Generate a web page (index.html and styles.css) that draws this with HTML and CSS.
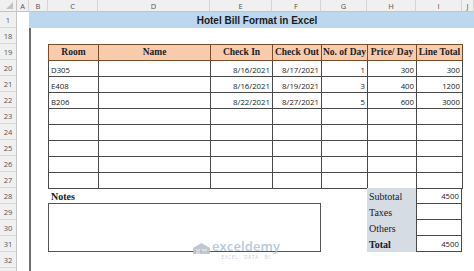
FILE: index.html
```html
<!DOCTYPE html>
<html>
<head>
<meta charset="utf-8">
<link rel="stylesheet" href="styles.css">
</head>
<body>
<div class="sheet">
  <div class="ch corner"><span class="tri"></span></div>
  <div class="ch">A</div>
  <div class="ch">B</div>
  <div class="ch">C</div>
  <div class="ch">D</div>
  <div class="ch">E</div>
  <div class="ch">F</div>
  <div class="ch">G</div>
  <div class="ch">H</div>
  <div class="ch">I</div>
  <div class="ch">J</div>

  <div class="rowhdr">
    <div class="rn">1</div>
    <div class="rn">18</div>
    <div class="rn">19</div>
    <div class="rn">20</div>
    <div class="rn">21</div>
    <div class="rn">22</div>
    <div class="rn">23</div>
    <div class="rn">24</div>
    <div class="rn">25</div>
    <div class="rn">26</div>
    <div class="rn">27</div>
    <div class="rn">28</div>
    <div class="rn">29</div>
    <div class="rn">30</div>
    <div class="rn">31</div>
    <div class="rn">32</div>
    <div class="rn last"></div>
  </div>

  <div class="title"><span>Hotel Bill Format in Excel</span></div>
  <div class="bline"></div>

  <div class="billwrap">
    <table class="bill">
      <colgroup>
        <col class="c-room"><col class="c-name"><col class="c-in"><col class="c-out"><col class="c-days"><col class="c-price"><col class="c-total">
      </colgroup>
      <thead>
        <tr><th>Room</th><th>Name</th><th>Check In</th><th>Check Out</th><th>No. of Day</th><th>Price/ Day</th><th>Line Total</th></tr>
      </thead>
      <tbody>
        <tr><td>D305</td><td></td><td class="r">8/16/2021</td><td class="r">8/17/2021</td><td class="r">1</td><td class="r">300</td><td class="r">300</td></tr>
        <tr><td>E408</td><td></td><td class="r">8/16/2021</td><td class="r">8/19/2021</td><td class="r">3</td><td class="r">400</td><td class="r">1200</td></tr>
        <tr><td>B206</td><td></td><td class="r">8/22/2021</td><td class="r">8/27/2021</td><td class="r">5</td><td class="r">600</td><td class="r">3000</td></tr>
        <tr><td></td><td></td><td></td><td></td><td></td><td></td><td></td></tr>
        <tr><td></td><td></td><td></td><td></td><td></td><td></td><td></td></tr>
        <tr><td></td><td></td><td></td><td></td><td></td><td></td><td></td></tr>
        <tr><td></td><td></td><td></td><td></td><td></td><td></td><td></td></tr>
        <tr><td></td><td></td><td></td><td></td><td></td><td></td><td></td></tr>
      </tbody>
    </table>
  </div>

  <div class="notes-label">Notes</div>
  <div class="notes-box"></div>

  <div class="summary">
    <div class="sl">Subtotal</div><div class="sv">4500</div>
    <div class="sl">Taxes</div><div class="sv"></div>
    <div class="sl">Others</div><div class="sv"></div>
    <div class="sl bold">Total</div><div class="sv">4500</div>
  </div>

  <div class="wm">
    <svg class="wm-icon" width="17" height="11" viewBox="0 0 17 11">
      <polygon points="0,5 8.5,0 17,5 17,11 0,11" fill="#b9c2ce"/>
      <rect x="3" y="6" width="4" height="5" fill="#d3d9e1"/>
      <rect x="9" y="6" width="5" height="3" fill="#d3d9e1"/>
    </svg>
    <div class="wm-text">
      <span class="wm-name">exceldemy</span>
      <span class="wm-sub">EXCEL · DATA · BI</span>
    </div>
  </div>
</div>
</body>
</html>
```

FILE: styles.css
```css
html, body {
  margin: 0;
  padding: 0;
  background: #ffffff;
}

.sheet {
  position: relative;
  width: 474px;
  height: 271px;
  overflow: hidden;
  display: grid;
  grid-template-columns: 17px 12px 19px 50px 112px 62px 49px 46px 49px 46px 1fr;
  grid-template-rows: 12px repeat(16, 16px) 1fr;
  background: #ffffff;
}

/* column headers */
.ch {
  background: #f0f0f0;
  border-right: 1px solid #d5d5d5;
  border-bottom: 1px solid #c4c4c4;
  box-sizing: border-box;
  display: flex;
  align-items: center;
  justify-content: center;
  font-family: "Open Sans", sans-serif;
  font-size: 7.5px;
  color: #555555;
}

.corner {
  position: relative;
  border-right: 1px solid #c4c4c4;
}

.tri {
  position: absolute;
  right: 3px;
  bottom: 2px;
  width: 0;
  height: 0;
  border-left: 7px solid transparent;
  border-bottom: 7px solid #c2c2c2;
}

/* row headers */
.rowhdr {
  grid-column: 1;
  grid-row: 2 / -1;
  display: flex;
  flex-direction: column;
  background: #f0f0f0;
  border-right: 1px solid #c4c4c4;
}

.rn {
  flex: none;
  height: 16px;
  box-sizing: border-box;
  border-bottom: 1px solid #d8d8d8;
  font-family: "Open Sans", sans-serif;
  font-size: 7.5px;
  color: #555555;
  display: flex;
  align-items: flex-end;
  justify-content: center;
  padding-bottom: 2px;
}

.rn.last {
  border-bottom: none;
}

/* title */
.title {
  grid-column: 3 / -1;
  grid-row: 2;
  background: #bdd7ee;
  display: flex;
  align-items: center;
  justify-content: center;
  padding-left: 11px;
  font-family: "Liberation Sans", Arial, sans-serif;
  font-weight: bold;
  font-size: 10px;
  color: #1a1a1a;
}

/* vertical dark line at B */
.bline {
  grid-column: 3;
  grid-row: 3 / -1;
  border-left: 2px solid #6e6e6e;
}

/* bill table */
.billwrap {
  grid-column: 4 / 11;
  grid-row: 4 / 13;
}

.bill {
  width: 100%;
  table-layout: fixed;
  border-collapse: collapse;
}

.c-room { width: 50px; }
.c-name { width: 112px; }
.c-in { width: 62px; }
.c-out { width: 49px; }
.c-days { width: 46px; }
.c-price { width: 49px; }
.c-total { width: 46px; }

.bill tr {
  height: 16px;
}

.bill th {
  background: #f8cbad;
  border: 1px solid #7b4b2a;
  font-family: "Liberation Serif", "Times New Roman", serif;
  font-weight: bold;
  font-size: 9.5px;
  color: #222222;
  padding: 0 1px;
  white-space: nowrap;
  vertical-align: middle;
  line-height: 1;
}

.bill td {
  border: 1px solid #4a4a4a;
  font-family: "Open Sans", sans-serif;
  font-size: 7.8px;
  color: #222222;
  padding: 0 2px 1px 2px;
  line-height: 1;
  vertical-align: bottom;
  white-space: nowrap;
}

.bill td.r {
  text-align: right;
}

/* notes */
.notes-label {
  grid-column: 4 / 8;
  grid-row: 13;
  align-self: end;
  padding-left: 3px;
  padding-bottom: 2px;
  font-family: "Liberation Serif", "Times New Roman", serif;
  font-weight: bold;
  font-size: 10px;
  line-height: 1;
  color: #1a1a1a;
}

.notes-box {
  grid-column: 4 / 8;
  grid-row: 14 / 17;
  margin-top: -1px;
  border: 1px solid #555555;
}

/* summary */
.summary {
  grid-column: 9 / 11;
  grid-row: 13 / 17;
  display: grid;
  grid-template-columns: 49px 46px;
  grid-template-rows: repeat(4, 16px);
}

.sl {
  background: #d6dce4;
  display: flex;
  align-items: center;
  padding-left: 2px;
  padding-top: 1px;
  font-family: "Liberation Serif", "Times New Roman", serif;
  font-size: 10px;
  color: #1a1a1a;
}

.sl.bold {
  font-weight: bold;
}

.sv {
  box-sizing: border-box;
  border-left: 1px solid #4a4a4a;
  border-right: 1px solid #4a4a4a;
  border-bottom: 1px solid #4a4a4a;
  display: flex;
  align-items: flex-end;
  justify-content: flex-end;
  padding: 0 2px 2px 0;
  font-family: "Open Sans", sans-serif;
  font-size: 7.8px;
  line-height: 1;
  color: #222222;
}

/* watermark */
.wm {
  position: absolute;
  left: 193px;
  top: 241px;
  display: flex;
  align-items: flex-start;
  gap: 2px;
  opacity: 0.9;
}

.wm-icon {
  margin-top: 2px;
}

.wm-text {
  display: flex;
  flex-direction: column;
  align-items: center;
}

.wm-name {
  font-family: "Open Sans", sans-serif;
  font-weight: 600;
  font-size: 13px;
  line-height: 11px;
  color: #b3c4d8;
  letter-spacing: 0.1px;
}

.wm-sub {
  font-family: "Open Sans", sans-serif;
  font-size: 4.5px;
  line-height: 5px;
  letter-spacing: 0.8px;
  color: #bcc6d2;
  margin-top: 3px;
}
```
